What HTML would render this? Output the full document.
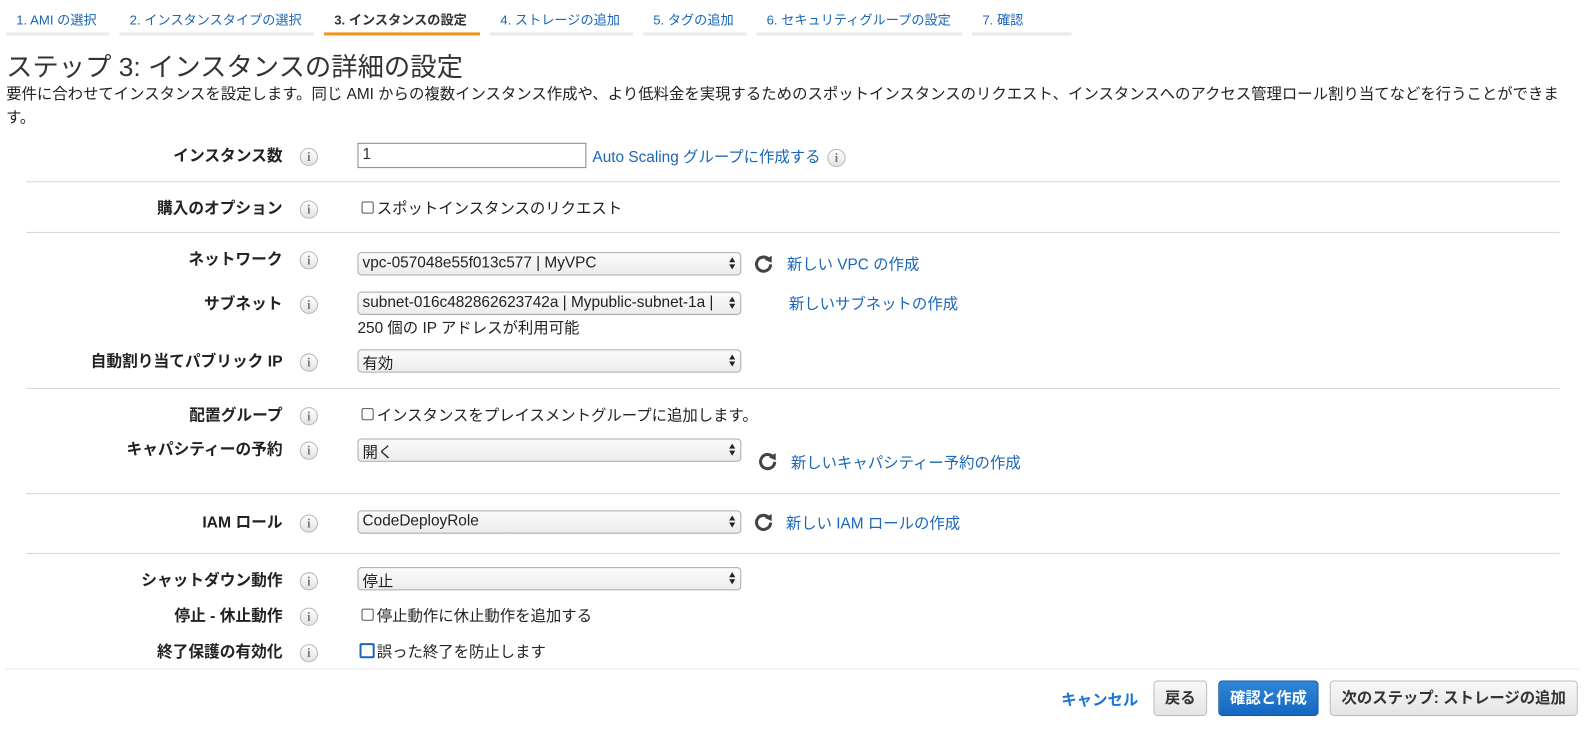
<!DOCTYPE html>
<html><head><meta charset="utf-8"><style>
*{box-sizing:border-box;margin:0;padding:0}
body{width:1588px;height:731px;background:#fff;font-family:"Liberation Sans","Noto Sans CJK JP",sans-serif;color:#333;position:relative;overflow:hidden;font-size:15.5px}
#w{position:absolute;left:0;top:0;width:1568px;height:722px;transform:scale(1.0127);transform-origin:0 0}
.a{position:absolute;white-space:nowrap}
.tab{position:absolute;top:0;height:35px;border-bottom:3px solid #eaeaea;font-size:13px;color:#1a66b8;padding:9px 0 0 10px;white-space:nowrap}
.tab.on{border-bottom-color:#f0931f;color:#333;font-weight:bold}
.lbl{position:absolute;right:1289px;font-weight:bold;font-size:15.5px;white-space:nowrap;color:#222;margin-top:-2px}
.info{position:absolute;left:296px;width:18px;height:18px;border-radius:50%;border:1px solid #b8b8b8;background:linear-gradient(#fff,#e2e2e2);font:bold 12px "Liberation Serif",serif;color:#777;text-align:center;line-height:16px}
.hr{position:absolute;left:26px;width:1514px;height:1px;background:#d5d5d5}
.sel{position:absolute;left:353px;width:379px;height:23px;border:1px solid #aaa;border-radius:4px;background:linear-gradient(#fbfbfb,#ececec);font-size:15.2px;padding:1px 0 0 4px;color:#222;overflow:hidden;white-space:nowrap}
.sel:after{content:"";position:absolute;right:5px;top:4px;width:0;height:0;border:3.5px solid transparent;border-bottom:5px solid #222;border-top:0}
.sel:before{content:"";position:absolute;right:5px;top:11px;width:0;height:0;border:3.5px solid transparent;border-top:5px solid #222;border-bottom:0}
.lnk{position:absolute;color:#1a66b8;font-size:15.2px;white-space:nowrap;margin-top:-2px}
.cb{position:absolute;left:357px;width:12px;height:12px;border:1px solid #555;border-radius:2px;background:#fff}
.cbt{position:absolute;left:372px;font-size:15.2px;white-space:nowrap;color:#222;margin-top:-2px}
.ref{position:absolute;width:20px;height:20px}
.btn{position:absolute;top:672px;height:35px;border:1px solid #bbb;border-radius:4px;background:linear-gradient(#f8f8f8,#e4e4e4);font-weight:bold;font-size:15.2px;text-align:center;line-height:33px;color:#333;white-space:nowrap}
</style></head><body><div id="w">
<div class="tab" style="left:6px;width:102px">1. AMI の選択</div>
<div class="tab" style="left:118px;width:192px">2. インスタンスタイプの選択</div>
<div class="tab on" style="left:320px;width:154px">3. インスタンスの設定</div>
<div class="tab" style="left:484px;width:141px">4. ストレージの追加</div>
<div class="tab" style="left:635px;width:102px">5. タグの追加</div>
<div class="tab" style="left:747px;width:203px">6. セキュリティグループの設定</div>
<div class="tab" style="left:960px;width:98px">7. 確認</div>

<div class="a" style="left:6px;top:46px;font-size:26px;color:#333">ステップ 3: インスタンスの詳細の設定</div>
<div class="a" style="left:6px;top:81px;font-size:15.2px;color:#222">要件に合わせてインスタンスを設定します。同じ AMI からの複数インスタンス作成や、より低料金を実現するためのスポットインスタンスのリクエスト、インスタンスへのアクセス管理ロール割り当てなどを行うことができま</div>
<div class="a" style="left:6px;top:104px;font-size:15.2px;color:#222">す。</div>

<svg width="0" height="0" style="position:absolute"><defs><symbol id="r" viewBox="0 0 20 20"><path d="M15.5 6.5A7 7 0 1 0 17 11" fill="none" stroke="#444" stroke-width="3"/><path d="M11 6.5L18 2.5L18 9.5Z" fill="#444"/></symbol></defs></svg>

<div class="lbl" style="top:144px">インスタンス数</div><div class="info" style="top:146px">i</div>
<div class="a" style="left:353px;top:141px;width:226px;height:25px;border:1px solid #888;background:#fff;padding:2px 4px;font-size:15.2px">1</div>
<div class="lnk" style="left:585px;top:145px">Auto Scaling グループに作成する</div><div class="info" style="left:817px;top:147px">i</div>
<div class="hr" style="top:179px"></div>

<div class="lbl" style="top:196px">購入のオプション</div><div class="info" style="top:198px">i</div>
<div class="cb" style="top:199px"></div><div class="cbt" style="top:196px">スポットインスタンスのリクエスト</div>
<div class="hr" style="top:229px"></div>

<div class="lbl" style="top:246px">ネットワーク</div><div class="info" style="top:248px">i</div>
<div class="sel" style="top:249px">vpc-057048e55f013c577 | MyVPC</div>
<svg class="ref" style="left:744px;top:250px"><use href="#r"/></svg>
<div class="lnk" style="left:777px;top:251px">新しい VPC の作成</div>

<div class="lbl" style="top:290px">サブネット</div><div class="info" style="top:292px">i</div>
<div class="sel" style="top:288px">subnet-016c482862623742a | Mypublic-subnet-1a | </div>
<div class="lnk" style="left:779px;top:290px">新しいサブネットの作成</div>
<div class="a" style="left:353px;top:312px;font-size:15.2px;color:#222">250 個の IP アドレスが利用可能</div>

<div class="lbl" style="top:347px">自動割り当てパブリック IP</div><div class="info" style="top:349px">i</div>
<div class="sel" style="top:345px">有効</div>
<div class="hr" style="top:383px"></div>

<div class="lbl" style="top:400px">配置グループ</div><div class="info" style="top:402px">i</div>
<div class="cb" style="top:403px"></div><div class="cbt" style="top:400px">インスタンスをプレイスメントグループに追加します。</div>

<div class="lbl" style="top:434px">キャパシティーの予約</div><div class="info" style="top:436px">i</div>
<div class="sel" style="top:433px">開く</div>
<svg class="ref" style="left:748px;top:445px"><use href="#r"/></svg>
<div class="lnk" style="left:781px;top:447px">新しいキャパシティー予約の作成</div>
<div class="hr" style="top:487px"></div>

<div class="lbl" style="top:506px">IAM ロール</div><div class="info" style="top:508px">i</div>
<div class="sel" style="top:504px">CodeDeployRole</div>
<svg class="ref" style="left:744px;top:505px"><use href="#r"/></svg>
<div class="lnk" style="left:776px;top:507px">新しい IAM ロールの作成</div>
<div class="hr" style="top:546px"></div>

<div class="lbl" style="top:563px">シャットダウン動作</div><div class="info" style="top:565px">i</div>
<div class="sel" style="top:560px">停止</div>

<div class="lbl" style="top:598px">停止 - 休止動作</div><div class="info" style="top:600px">i</div>
<div class="cb" style="top:601px"></div><div class="cbt" style="top:598px">停止動作に休止動作を追加する</div>

<div class="lbl" style="top:634px">終了保護の有効化</div><div class="info" style="top:636px">i</div>
<div class="cb" style="top:635px;left:355px;width:15px;height:15px;border:2px solid #1a66b8"></div><div class="cbt" style="top:634px">誤った終了を防止します</div>
<div class="hr" style="top:660px;left:6px;width:1554px;background:#e6e6e6"></div>

<div class="a" style="left:1048px;top:679px;color:#1a75d0;font-weight:bold;font-size:15.2px">キャンセル</div>
<div class="btn" style="left:1139px;width:53px">戻る</div>
<div class="btn" style="left:1203px;width:99px;background:linear-gradient(#2f86d6,#1566c0);border-color:#11559f;color:#fff">確認と作成</div>
<div class="btn" style="left:1313px;width:245px">次のステップ: ストレージの追加</div>
</div></body></html>
